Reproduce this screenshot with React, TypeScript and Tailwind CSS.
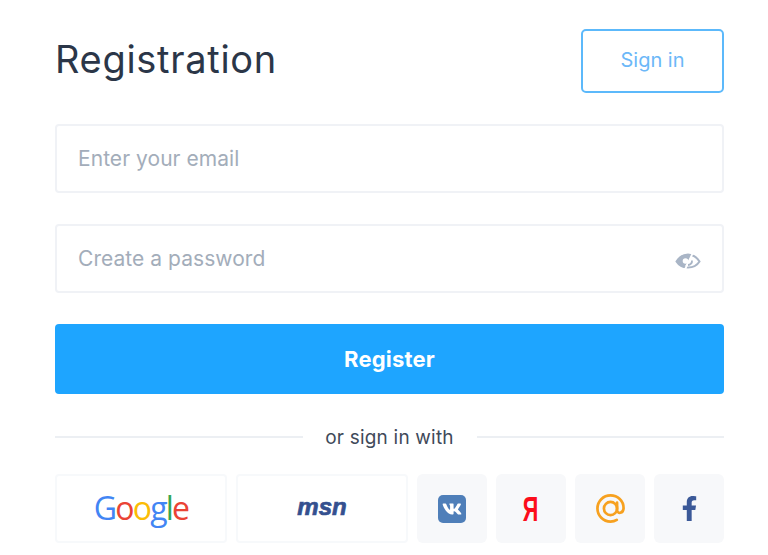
import { FaFacebookF, FaVk } from "react-icons/fa";

function EyeOff() {
  return (
    <svg width="26" height="20" viewBox="0 0 26 20" fill="none">
      <path d="M1.500 10.500C4 6.500 8 3.500 13 3.500s9 3 11.500 7c-2.500 4-6.500 6-11.500 6s-9-2-11.500-6Z" stroke="#a9b5c6" strokeWidth="2" />
      <path d="M2 10.500C4.500 6.500 8 3.500 13 3.500h4L9 17C5.500 15.500 3.500 13 2 10.500Z" fill="#a9b5c6" />
      <circle cx="10.500" cy="10" r="2.800" fill="#ffffff" />
      <path d="M18.500 0.500 9.500 19.500" stroke="#ffffff" strokeWidth="1.800" />
      <path d="M17 9.500a4 4 0 0 1-4 4.500" stroke="#a9b5c6" strokeWidth="1.800" />
    </svg>
  );
}

function MailAt() {
  return (
    <svg width="29" height="29" viewBox="0 0 30 30" fill="none" stroke="#f7a11f" strokeWidth="2.800">
      <circle cx="15" cy="15" r="6.800" />
      <path d="M21.800 9v7.500c0 4.500 6.700 4 6.700-2C28.500 7 22.500 1.500 15 1.500S1.500 7.500 1.500 15 7.500 28.500 15 28.500c2.500 0 4.500-.5 6.500-1.700" strokeLinecap="round" />
    </svg>
  );
}

function TextField({ placeholder, icon }: { placeholder: string; icon?: boolean }) {
  return (
    <div className="flex items-center justify-between h-[69px] rounded border-2 border-[#f0f2f6] bg-white pl-[21px] pr-[21px]">
      <span className="text-[21px] tracking-[0.05px] text-[#a3adba]">{placeholder}</span>
      {icon && (
        <span className="mt-[5px]">
          <EyeOff />
        </span>
      )}
    </div>
  );
}

export default function App() {
  return (
    <div className="w-[768px] h-[555px] overflow-hidden bg-white pl-[55px] pt-[29px] pr-[44px] font-['Inter',sans-serif]">
      {/* Header */}
      <div className="flex items-center justify-between">
        <h1 className="text-[38px] leading-none tracking-[0.7px] text-[#2b3648] pb-[4px]">Registration</h1>
        <button className="w-[143px] h-[64px] rounded-[5px] border-2 border-[#5cb9fb] pb-[2px] text-[20px] text-[#6cb8f8]">
          Sign in
        </button>
      </div>

      {/* Form */}
      <div className="mt-[31px] flex flex-col gap-[31px]">
        <TextField placeholder="Enter your email" />
        <TextField placeholder="Create a password" icon />
        <button className="h-[70px] rounded bg-[#1ea5ff] text-[22px] font-bold tracking-[0.2px] text-white">Register</button>
      </div>

      {/* Divider */}
      <div className="mt-[30px] flex items-center h-[26px]">
        <div className="flex-1 h-[2px] bg-[#eceff3]" />
        <span className="w-[174px] pt-[2px] text-center text-[19px] tracking-[0.2px] text-[#3f4a5a]">or sign in with</span>
        <div className="flex-1 h-[2px] bg-[#eceff3]" />
      </div>

      {/* Social */}
      <div className="mt-[24px] flex gap-[9px]">
        <div className="w-[172px] h-[69px] flex items-center justify-center rounded border-2 border-[#f7f9fb] bg-white">
          <span className="text-[32px] leading-none font-medium font-['Open_Sans',sans-serif] tracking-[-1.8px] mt-[-2px]">
            <span className="text-[#4285f4]">G</span>
            <span className="text-[#ea4335]">o</span>
            <span className="text-[#fbbc05]">o</span>
            <span className="text-[#4285f4]">g</span>
            <span className="text-[#34a853]">l</span>
            <span className="text-[#ea4335]">e</span>
          </span>
        </div>
        <div className="w-[172px] h-[69px] flex items-center justify-center rounded border-2 border-[#f7f9fb] bg-white">
          <span className="text-[24px] leading-none font-bold italic text-[#34508f] font-['Liberation_Sans',sans-serif] mt-[-4px] [-webkit-text-stroke:0.7px_#34508f]">msn</span>
        </div>
        <div className="w-[70px] h-[69px] flex items-center justify-center rounded-md bg-[#f7f8fa]">
          <div className="w-[28px] h-[28px] flex items-center justify-center rounded-[5px] bg-[#4f7fb9]">
            <FaVk className="text-white text-[20px]" />
          </div>
        </div>
        <div className="w-[70px] h-[69px] flex items-center justify-center rounded-md bg-[#f7f8fa]">
          <span className="text-[35px] leading-none font-bold text-[#fc0d1b] font-['Liberation_Sans',sans-serif] scale-x-[0.62]">Я</span>
        </div>
        <div className="w-[70px] h-[69px] flex items-center justify-center rounded-md bg-[#f7f8fa]">
          <MailAt />
        </div>
        <div className="w-[70px] h-[69px] flex items-center justify-center rounded-md bg-[#f7f8fa]">
          <FaFacebookF className="text-[#3b5998] text-[25px]" />
        </div>
      </div>
    </div>
  );
}
